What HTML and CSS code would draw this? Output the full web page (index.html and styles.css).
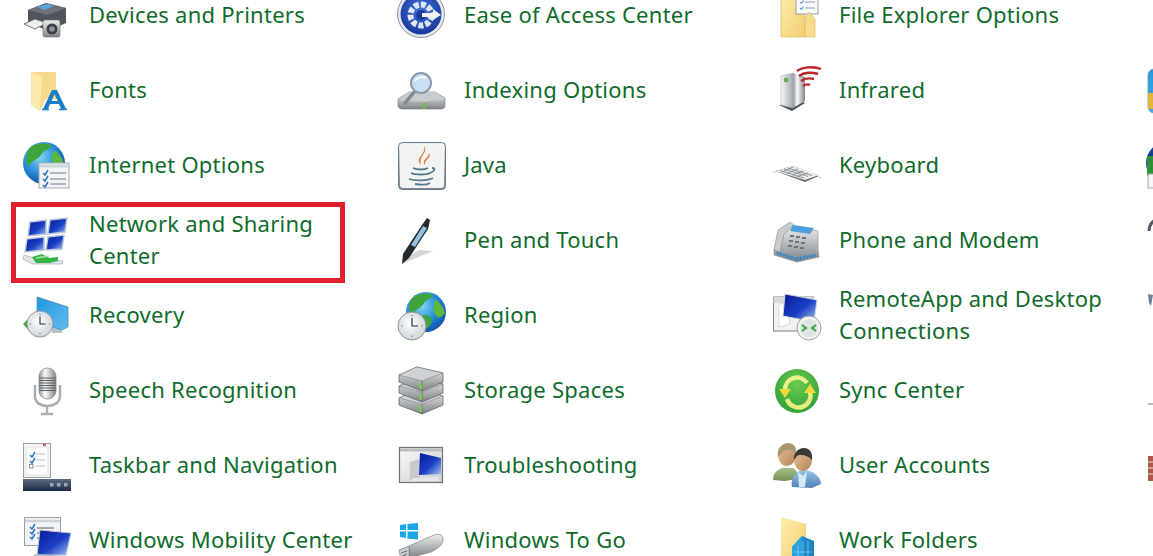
FILE: index.html
```html
<!DOCTYPE html>
<html lang="en">
<head>
<meta charset="utf-8">
<title>All Control Panel Items</title>
<link rel="stylesheet" href="styles.css">
</head>
<body>
<svg class="defs" aria-hidden="true">
<defs>
<linearGradient id="folder" x1="0" y1="0" x2="1" y2="1"><stop offset="0" stop-color="#fdeeb0"/><stop offset="1" stop-color="#f3cd6e"/></linearGradient>
<linearGradient id="steel" x1="0" y1="0" x2="0" y2="1"><stop offset="0" stop-color="#eceded"/><stop offset="1" stop-color="#7f8489"/></linearGradient>
<linearGradient id="steelH" x1="0" y1="0" x2="1" y2="0"><stop offset="0" stop-color="#f7f7f7"/><stop offset="1" stop-color="#a5a9ad"/></linearGradient>
<linearGradient id="chrome" x1="0" y1="0" x2="1" y2="0"><stop offset="0" stop-color="#8f9499"/><stop offset=".35" stop-color="#fafafa"/><stop offset="1" stop-color="#82878c"/></linearGradient>
<linearGradient id="screen" x1="0" y1="0" x2="1" y2="1"><stop offset="0" stop-color="#071b96"/><stop offset=".55" stop-color="#1a3fc4"/><stop offset="1" stop-color="#a9c4f4"/></linearGradient>
<linearGradient id="sky" x1="0" y1="0" x2="1" y2="1"><stop offset="0" stop-color="#1f96df"/><stop offset="1" stop-color="#63bdee"/></linearGradient>
<linearGradient id="bar" x1="0" y1="0" x2="0" y2="1"><stop offset="0" stop-color="#5b6b82"/><stop offset="1" stop-color="#1c2c47"/></linearGradient>
<radialGradient id="sea" cx=".4" cy=".35" r=".75"><stop offset="0" stop-color="#7fd6f4"/><stop offset=".6" stop-color="#1f7fd0"/><stop offset="1" stop-color="#0c3f9a"/></radialGradient>
<radialGradient id="face" cx=".45" cy=".4" r=".7"><stop offset="0" stop-color="#ffffff"/><stop offset="1" stop-color="#c3cbd2"/></radialGradient>
<radialGradient id="blue" cx=".5" cy=".4" r=".7"><stop offset="0" stop-color="#3f72d8"/><stop offset="1" stop-color="#122f93"/></radialGradient>
<radialGradient id="greenball" cx=".5" cy=".35" r=".75"><stop offset="0" stop-color="#6ccb4f"/><stop offset="1" stop-color="#279a35"/></radialGradient>
<linearGradient id="skin" x1="0" y1="0" x2="1" y2="1"><stop offset="0" stop-color="#e9c29c"/><stop offset="1" stop-color="#b58358"/></linearGradient>
<linearGradient id="shirtB" x1="0" y1="0" x2="0" y2="1"><stop offset="0" stop-color="#9ac4e8"/><stop offset="1" stop-color="#4f82b4"/></linearGradient>
<linearGradient id="shirtG" x1="0" y1="0" x2="0" y2="1"><stop offset="0" stop-color="#a8c088"/><stop offset="1" stop-color="#6f9257"/></linearGradient>
<linearGradient id="winbg" x1="0" y1="0" x2="1" y2="1"><stop offset="0" stop-color="#fafafa"/><stop offset="1" stop-color="#c9ccce"/></linearGradient>
<g id="globe">
<circle r="21" fill="url(#sea)"/>
<path d="M-13-16C-6-20 3-21 8-17 4-13-1-13-3-8-6-3-13-3-15 3-20-1-18-11-13-16Z" fill="#3fa53a"/>
<path d="M11-13C15-9 19-4 20 1 16 6 13 8 10 3 8 0 6-9 11-13Z" fill="#5cb83c"/>
<path d="M-4 4C1 2 7 5 6 10 5 15 0 19-3 19-3 14-8 9-4 4Z" fill="#3fa53a"/>
</g>
<g id="clock">
<circle r="14" fill="url(#face)" stroke="#8f979e"/>
<circle r="11" fill="none" stroke="#dfe3e6"/>
<path d="M0-8V0H6" fill="none" stroke="#27303a" stroke-width="1.2"/>
<path d="M0-11V-9.5M0 11V9.500M-11 0H-9.500M11 0H9.500" stroke="#6b737b"/>
</g>
<g id="checks">
<path d="M0 2l2 2 3-5" fill="none" stroke="#2a78c8" stroke-width="1.500"/>
</g>
<g id="disk">
<path d="M2 8L20 0 46 6V15L25 24 2 15Z" fill="url(#steel)" stroke="#62676c" stroke-width=".8"/>
<path d="M2 8L25 14 46 6 20 0Z" fill="#cfd2d4" stroke="#7b8085" stroke-width=".6"/>
<path d="M25 14V24" stroke="#62676c" stroke-width=".8"/>
<rect x="22.500" y="16" width="2.500" height="6" fill="#76d03a"/>
</g>
</defs>
</svg>
<main class="page">
<div class="grid">

<a class="item">
<svg class="icon" viewBox="0 0 48 48"><path d="M6 18L24 11 44 16V31L26 39 6 30Z" fill="#50555b"/><path d="M6 18L26 23 44 16 24 11Z" fill="#6d7379"/><path d="M15 15L25 12 32 14 22 18Z" fill="#5aa5dc"/><path d="M2 32L13 27 25 31 13 37Z" fill="#eceef0" stroke="#555a5f" stroke-width=".8"/><rect x="21" y="28" width="17" height="17" rx="2" fill="url(#steel)" stroke="#6a6f74" stroke-width=".6"/><circle cx="30" cy="37" r="5.500" fill="#3a3f45"/><circle cx="30" cy="37" r="2.800" fill="#8d949b"/></svg>
<span class="label">Devices and Printers</span>
</a>
<a class="item">
<svg class="icon" viewBox="0 0 48 48"><circle cx="24" cy="22" r="23.500" fill="#e6e9ee" stroke="#8d95a3"/><circle cx="24" cy="22" r="20.500" fill="url(#blue)"/><circle cx="24" cy="23" r="10.500" fill="none" stroke="#dfe6f5" stroke-width="6" stroke-dasharray="5 2"/><circle cx="24" cy="23" r="5" fill="#1b3a9f"/><path d="M25 21H36V17L44 23 36 28V25H25Z" fill="#f1f4fa"/></svg>
<span class="label">Ease of Access Center</span>
</a>
<a class="item">
<svg class="icon" viewBox="0 0 48 48"><path d="M9 0H33V45H9Z" fill="url(#folder)" stroke="#dcb95f" stroke-width=".7"/><rect x="24" y="-2" width="22" height="24" fill="#f7f8fa" stroke="#9aa0a6"/><path d="M33 4h10M33 10h10M33 16h10" stroke="#8fa0b2"/><path d="M28 10l1.500 1.500 2-3M28 16l1.500 1.500 2-3" fill="none" stroke="#2a78c8"/><path d="M33 45V27L37 20 43 27V45Z" fill="#f8dc8e" stroke="#dcb95f" stroke-width=".7"/></svg>
<span class="label">File Explorer Options</span>
</a>
<a class="item stub"><svg class="icon" viewBox="0 0 48 48"></svg></a>

<a class="item">
<svg class="icon" viewBox="0 0 48 48"><path d="M9 5H34V32H24L18 44 9 38Z" fill="#f6d98a"/><path d="M9 5L20 9 18 44 9 38Z" fill="#fbe9ad"/><path d="M21 42L30 23H35L44 42H39L37 37H28L26 42ZM29.500 34H35.500L32.500 27Z" fill="#1a7fc4"/><path d="M20 42.500H27M37 42.500H45" stroke="#1a7fc4" stroke-width="1.400"/></svg>
<span class="label">Fonts</span>
</a>
<a class="item">
<svg class="icon" viewBox="0 0 48 48"><path d="M1 32L12 25H38L48 31V38C48 41 46 42 44 42H6C3 42 1 41 1 38Z" fill="url(#steel)" stroke="#6f7479" stroke-width=".6"/><path d="M1 33C12 35 37 35 48 32L38 25H12Z" fill="#c9ccce"/><rect x="26" y="36" width="3" height="6" fill="#6ebb3f"/><path d="M8 36L18 24" stroke="#83888d" stroke-width="3.500" stroke-linecap="round"/><circle cx="24" cy="16" r="10" fill="#c7e2f6" stroke="#8d98a3" stroke-width="2"/><path d="M18 14C20 10 25 9 29 11" stroke="#fff" stroke-width="1.500" fill="none"/></svg>
<span class="label">Indexing Options</span>
</a>
<a class="item">
<svg class="icon" viewBox="0 0 48 48"><path d="M7 38L20 44 33 36 26 33 20 38Z" fill="#4d5257"/><path d="M9 9L21 6V41L9 38Z" fill="url(#steelH)" stroke="#a7abaf" stroke-width=".6"/><path d="M21 6L33 10V34L21 41Z" fill="url(#chrome)"/><circle cx="14" cy="13" r="2" fill="#6ebb3f" stroke="#3f6a2a" stroke-width=".5"/><g fill="none" stroke="#b8262a" stroke-width="2.400"><path d="M25 4C30 0 42-1 49 2"/><path d="M27 9C32 5 40 5 46 7"/><path d="M29 14C33 11 38 11 42 12"/><path d="M31 19C34 17 36 17 38 18"/></g></svg>
<span class="label">Infrared</span>
</a>
<a class="item stub"><svg class="icon" viewBox="0 0 48 48"><rect x="1" y="2" width="40" height="44" rx="6" fill="url(#sky)" stroke="#7aa4b8"/><rect x="1" y="26" width="40" height="16" fill="#e3b33d"/></svg></a>

<a class="item">
<svg class="icon" viewBox="0 0 48 48"><use href="#globe" x="22" y="21"/><rect x="17" y="21" width="30" height="25" fill="#f2f4f7" stroke="#a4aab1"/><path d="M18 24H46" stroke="#cfd4da" stroke-width="3"/><use href="#checks" x="21" y="29"/><use href="#checks" x="21" y="35"/><use href="#checks" x="21" y="41"/><path d="M28 31H44M28 37H44M28 42H44" stroke="#6d7883"/></svg>
<span class="label">Internet Options</span>
</a>
<a class="item">
<svg class="icon" viewBox="0 0 48 48"><rect x="1.500" y=".5" width="47" height="47" rx="4" fill="url(#steel)" stroke="#5f7c92"/><rect x="3" y="2" width="44" height="44" rx="3" fill="#f2f3f3"/><path d="M27 4C32 10 21 14 24 23 17 16 30 12 27 4Z" fill="#e0702a"/><path d="M32 11C35 16 27 17 28 23 24 18 32 16 32 11Z" fill="#e0702a"/><g fill="none" stroke="#56788f" stroke-width="1.800"><path d="M16 26C20 28 28 28 31 26"/><path d="M14 31C18 33 30 33 33 31 38 29 39 26 35 26"/><path d="M12 37C18 39 30 39 36 36"/><path d="M18 42C24 43 30 43 33 41"/></g></svg>
<span class="label">Java</span>
</a>
<a class="item">
<svg class="icon" viewBox="0 0 48 48"><path d="M3 29L21 24 47 34 33 40Z" fill="#6a6e73"/><path d="M3 29L21 24 47 33 33 38Z" fill="#e8eaec"/><path d="M8 28.500L32 36M12 27L36 34.500M16 26L40 33.500M10 30L21 25M15 31.500L26 27M20 33L31 29M25 34.500L36 31" stroke="#7c8186" stroke-width=".8"/><path d="M3 30H1M47 35L49 36" stroke="#b5b8bb"/></svg>
<span class="label">Keyboard</span>
</a>
<a class="item stub"><svg class="icon" viewBox="0 0 48 48"><circle cx="20" cy="21" r="21" fill="#123f8f"/><rect x="0" y="14" width="12" height="20" fill="#2f8f3a"/><rect x="1" y="32" width="30" height="14" fill="#f2f4f7" stroke="#a4aab1"/></svg></a>

<a class="item">
<svg class="icon" viewBox="0 0 48 48"><g stroke="#bcc6da" stroke-width="1.500"><path d="M8 5L24 3V17L6 19Z" fill="url(#screen)"/><path d="M28 3L45 1 43 15 26 17Z" fill="url(#screen)"/><path d="M5 22L22 20V33L3 35Z" fill="url(#screen)"/><path d="M26 20L42 18 40 32 24 33Z" fill="url(#screen)"/></g><path d="M2 38L12 41 41 44 40 47 10 47 1 42Z" fill="#dfe3e6" stroke="#9ca2a8" stroke-width=".6"/><path d="M10 40L20 37 27 41 36 40V44L27 46H14Z" fill="#37b24a"/><path d="M14 41L27 39" stroke="#a3e6a5" stroke-width="1.500"/></svg>
<span class="label">Network and Sharing Center</span>
<span class="marker"></span>
</a>
<a class="item">
<svg class="icon" viewBox="0 0 48 48"><path d="M5 47L36 34 22 33 9 40Z" fill="#b6b9bc" opacity=".6"/><path d="M30 1L33 3 31 12 12 41 5 47 6 37 25 8Z" fill="#23282e"/><path d="M26 9L30 11 18 30 14 28Z" fill="#93c2dc"/></svg>
<span class="label">Pen and Touch</span>
</a>
<a class="item">
<svg class="icon" viewBox="0 0 48 48"><path d="M2 33L9 12 18 9 46 14V33L47 40 25 45 2 38Z" fill="url(#steel)" stroke="#7e8489" stroke-width=".6"/><path d="M2 33L6 13 18 5 22 8 12 17 8 35Z" fill="#c8ccd0" stroke="#858a8f" stroke-width=".6"/><path d="M21 8L42 11 38 17 18 14Z" fill="#4f9fdc"/><g fill="#6c747c"><rect x="18" y="18" width="4" height="2"/><rect x="24" y="19" width="4" height="2"/><rect x="30" y="20" width="4" height="2"/><rect x="17" y="23" width="4" height="2"/><rect x="23" y="24" width="4" height="2"/><rect x="29" y="25" width="4" height="2"/><rect x="16" y="28" width="4" height="2"/><rect x="22" y="29" width="4" height="2"/><rect x="28" y="30" width="4" height="2"/></g><path d="M5 36L24 42 44 38" stroke="#2e86c9" stroke-width="3" fill="none" stroke-dasharray="2 1"/></svg>
<span class="label">Phone and Modem</span>
</a>
<a class="item stub"><svg class="icon" viewBox="0 0 48 48"><path d="M2 14C2 6 8 1 16 1" fill="none" stroke="#555b66" stroke-width="3"/></svg></a>

<a class="item">
<svg class="icon" viewBox="0 0 48 48"><path d="M30 34H40V41H30Z" fill="#b8bfc5"/><path d="M15 5L46 15V35L40 38 15 30Z" fill="url(#sky)" stroke="#4f8fb7" stroke-width=".8"/><path d="M1 32L9 24 9 29H14V36H9L10 42Z" fill="#3fae3c"/><use href="#clock" transform="translate(18 32) scale(.93)"/></svg>
<span class="label">Recovery</span>
</a>
<a class="item">
<svg class="icon" viewBox="0 0 48 48"><use href="#globe" transform="translate(29 20) scale(.95)"/><use href="#clock" x="15" y="34"/></svg>
<span class="label">Region</span>
</a>
<a class="item">
<svg class="icon" viewBox="0 0 48 48"><rect x="1.500" y="5" width="40" height="34" fill="#f0f1f2" stroke="#7c8187"/><rect x="1.500" y="5" width="40" height="6" fill="#d8dadc"/><path d="M7 12H16L18 32 7 35Z" fill="#fff" stroke="#bcc0c4" stroke-width=".5"/><path d="M13 2L45 8 42 30 11 24Z" fill="url(#screen)" stroke="#cfd5df"/><circle cx="37" cy="36" r="12" fill="#f2f4f4" stroke="#9aa0a5"/><circle cx="37" cy="36" r="9" fill="#dfe3e4"/><path d="M30 33L34 36 30 39M44 33L40 36 44 39" fill="none" stroke="#39a33f" stroke-width="2"/></svg>
<span class="label">RemoteApp and Desktop Connections</span>
</a>
<a class="item stub"><svg class="icon" viewBox="0 0 48 48"><path d="M1 2L6 3 4 14 2 11Z" fill="#6f7f99"/></svg></a>

<a class="item">
<svg class="icon" viewBox="0 0 48 48"><path d="M13 18V29C13 36 19 39 25 39S38 36 38 29V18" fill="none" stroke="#a8adb2" stroke-width="2.500"/><rect x="17" y="1" width="17" height="31" rx="8.500" fill="url(#chrome)" stroke="#787d82" stroke-width=".7"/><path d="M17.500 11H33.500M17.500 13.500H33.500M17.500 16H33.500M17.500 18.500H33.500M17.500 21H33.500M17.500 23.500H33.500" stroke="#5c6166"/><path d="M25 39V46M19 47H31" stroke="#aeb3b8" stroke-width="2.500"/></svg>
<span class="label">Speech Recognition</span>
</a>
<a class="item">
<svg class="icon" viewBox="0 0 48 48"><use href="#disk" y="23"/><use href="#disk" y="11"/><use href="#disk"/></svg>
<span class="label">Storage Spaces</span>
</a>
<a class="item">
<svg class="icon" viewBox="0 0 48 48"><circle cx="25" cy="24" r="22" fill="url(#greenball)"/><g fill="none" stroke-width="4.500"><path d="M13 23A12 12 0 0 1 35 16" stroke="#eaf08c"/><path d="M38 25A12 12 0 0 1 15 32" stroke="#e6ee80"/></g><path d="M7 22H19L13 31Z" fill="#f3d83c"/><path d="M32 26H44L38 17Z" fill="#f3d83c"/></svg>
<span class="label">Sync Center</span>
</a>
<a class="item stub"><svg class="icon" viewBox="0 0 48 48"><path d="M1 37H6" stroke="#9da2a7" stroke-width="1.500"/></svg></a>

<a class="item">
<svg class="icon" viewBox="0 0 48 48"><rect x="1.500" y="1.500" width="27" height="34" fill="#f4f4f4" stroke="#9a9fa5"/><rect x="4" y="5" width="22" height="28" fill="#fcfcfc" stroke="#d0d3d6" stroke-width=".6"/><rect x="21" y="2" width="3" height="2" fill="#c9605f"/><use href="#checks" x="8" y="11"/><use href="#checks" x="8" y="17"/><rect x="7.500" y="22.500" width="3.500" height="3.500" fill="none" stroke="#8d9297"/><path d="M14 12H23M14 18H23M14 24H23" stroke="#bcc1c6"/><rect x="1" y="37" width="48" height="12" fill="url(#bar)"/><path d="M28 41h3.500v3.500h-3.500zM35 41h3.500v3.500h-3.500zM42 41h3.500v3.500h-3.500z" fill="#9aa5b3"/></svg>
<span class="label">Taskbar and Navigation</span>
</a>
<a class="item">
<svg class="icon" viewBox="0 0 48 48"><rect x="2.500" y="5.500" width="43" height="35" fill="url(#winbg)" stroke="#6e7378" stroke-width="1.200"/><path d="M3 8H45" stroke="#b9bdc1" stroke-width="3"/><path d="M13 20L23 17V37L13 40Z" fill="#c8cbce"/><path d="M23 11L44 16V32L22 33Z" fill="url(#screen)"/><path d="M16 36L42 35V39H14Z" fill="#e4e6e8"/></svg>
<span class="label">Troubleshooting</span>
</a>
<a class="item">
<svg class="icon" viewBox="0 0 48 48"><path d="M1 38C1 31 5 28 10 26H21C25 28 26 33 26 37L12 39Z" fill="url(#shirtG)"/><ellipse cx="15" cy="13" rx="9" ry="11" fill="url(#skin)"/><path d="M6 15C4 6 11 1 16 1 22 1 25 6 24 10 18 6 11 8 9 12Z" fill="#a89a6e"/><path d="M20 45C18 36 24 29 31 28 41 28 49 35 49 42L40 46Z" fill="url(#shirtB)"/><path d="M26 30L31 34 35 29 33 45H27Z" fill="#d9e8f5"/><ellipse cx="31" cy="18" rx="9" ry="11" fill="url(#skin)"/><path d="M22 18C21 11 26 6 32 6 38 6 41 11 40 18 36 13 28 12 25 14Z" fill="#3b3a36"/></svg>
<span class="label">User Accounts</span>
</a>
<a class="item stub"><svg class="icon" viewBox="0 0 48 48"><rect x="1" y="14" width="8" height="25" fill="#a85a48"/><path d="M1 20H8M1 26H8M1 32H8" stroke="#e9dbd4"/></svg></a>

<a class="item">
<svg class="icon" viewBox="0 0 48 48"><rect x="2.500" y=".5" width="36" height="28" fill="#f1f3f5" stroke="#9aa0a6"/><path d="M3 4H38" stroke="#cdd2d7" stroke-width="2.500"/><use href="#checks" x="8" y="8"/><use href="#checks" x="8" y="13"/><use href="#checks" x="8" y="18"/><path d="M15 11H32M15 16H28M15 21H24" stroke="#565f69"/><path d="M18 13L49 16 44 38H15Z" fill="url(#screen)" stroke="#c7ccd2"/><path d="M13 37L44 39 46 50H3Z" fill="#b8bdc2"/></svg>
<span class="label">Windows Mobility Center</span>
</a>
<a class="item">
<svg class="icon" viewBox="0 0 48 48"><path d="M12 29L37 18C44 16 47 19 46 24 45 29 38 33 34 35L12 41Z" fill="url(#steel)" stroke="#6d7277" stroke-width=".6"/><path d="M2 33L12 29V41L4 43Z" fill="#c9cdd0" stroke="#70757a" stroke-width=".6"/><path d="M4 36L10 34M5 39L10 37" stroke="#6a6f74"/><g fill="#19a6ea"><path d="M3 8L9 7V13H3Z"/><path d="M10.500 7L21 6V13H10.500Z"/><path d="M3 14.500H9V21L3 20Z"/><path d="M10.500 14.500H21V22.500L10.500 21.500Z"/></g></svg>
<span class="label">Windows To Go</span>
</a>
<a class="item">
<svg class="icon" viewBox="0 0 48 48"><path d="M9 0L34 7V41L9 46Z" fill="url(#folder)"/><path d="M20 30L30 19 42 24V48H20Z" fill="#1c86c6"/><path d="M20 30L30 19V48H20Z" fill="#2ba4de"/><path d="M22 35H40M22 40H40M22 45H40M26 28V48M31 24V48M36 24V48" stroke="#8ed0ef" stroke-width=".7"/></svg>
<span class="label">Work Folders</span>
</a>

</div>
</main>
</body>
</html>
```
FILE: styles.css
```css
* { box-sizing: border-box; }
html, body { margin: 0; height: 100%; background: #fff; }
.defs { position: absolute; width: 0; height: 0; }
.page { height: 100vh; overflow: hidden; }
.grid {
  display: grid;
  grid-template-columns: repeat(4, 375px);
  grid-auto-rows: 75px;
  margin-top: -22px;
  padding-left: 22px;
  width: 1600px;
}
.item {
  position: relative;
  display: flex;
  align-items: center;
  gap: 19px;
  color: #0f6b2c;
}
.icon { width: 48px; height: 48px; flex: none; overflow: visible; }
.label {
  width: 285px;
  margin-bottom: 4px;
  font-family: "Noto Sans", sans-serif;
  font-size: 22px;
  letter-spacing: .25px;
  line-height: 32px;
}
.marker {
  position: absolute;
  left: -11px;
  top: -1px;
  width: 334px;
  height: 81px;
  border: 5px solid #e21f2d;
}
```
